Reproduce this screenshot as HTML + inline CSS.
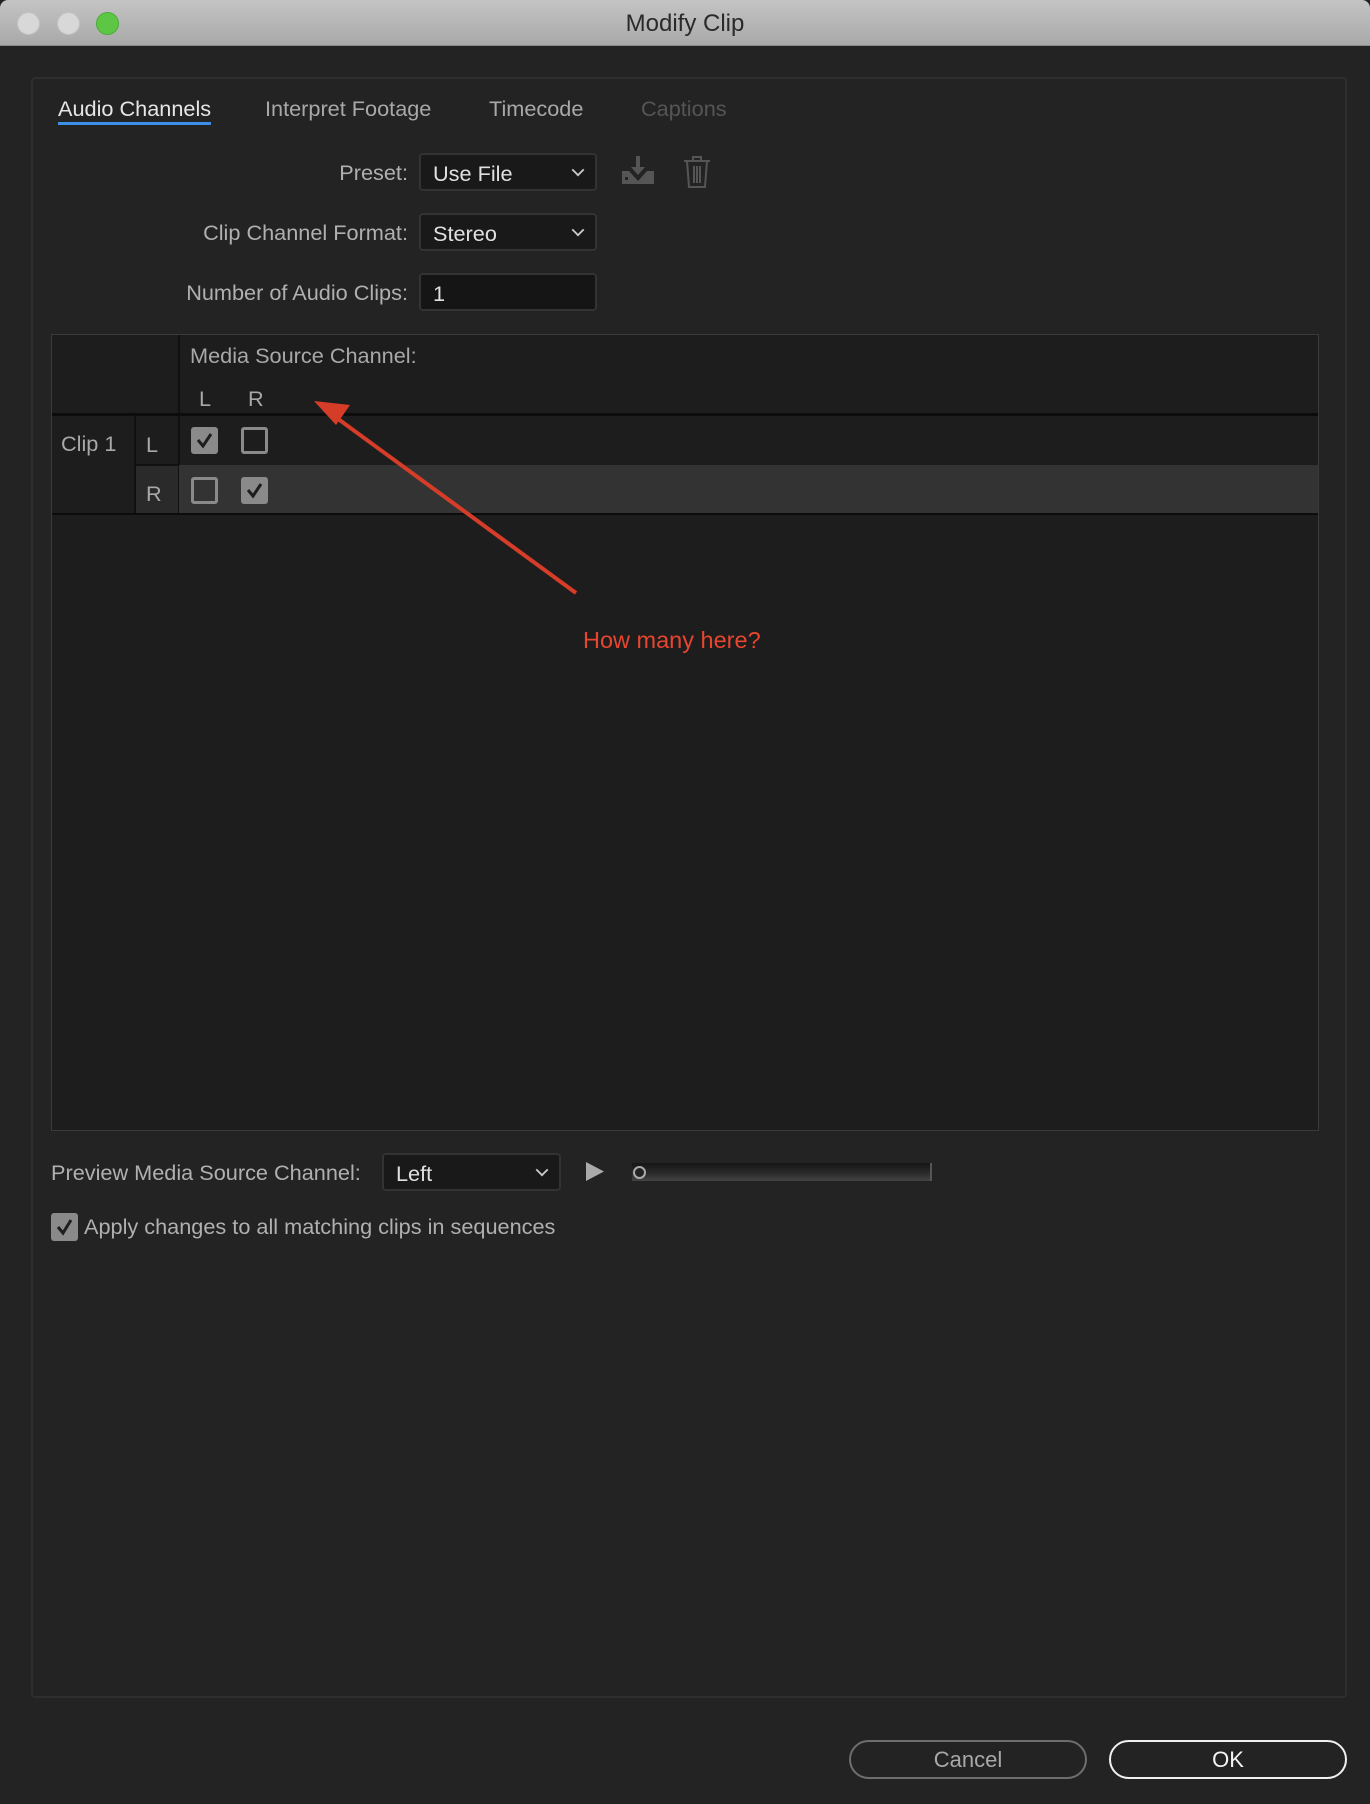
<!DOCTYPE html>
<html><head><meta charset="utf-8">
<style>
*{margin:0;padding:0;box-sizing:border-box}
html,body{width:1370px;height:1804px;overflow:hidden;background:#232323;font-family:"Liberation Sans",sans-serif;color:#b4b4b4}
.abs{position:absolute}
#title{left:0;top:0;width:1370px;height:46px;background:linear-gradient(#c4c4c4,#a9a9a9);border-bottom:1px solid #8a8a8a;border-radius:8px 8px 0 0}
#title .t{left:0;width:1370px;top:10px;text-align:center;font-size:24px;color:#2a2a2a}
.dot{width:23px;height:23px;border-radius:50%;top:12px;background:#d8d8d8;border:1px solid #c2c2c2}
#panel{left:31px;top:77px;width:1316px;height:1621px;border:2px solid #2e2e2e;border-radius:4px}
.tab{top:96px;font-size:21.7px;color:#a8a8a8;white-space:nowrap}
.lbl{font-size:21.7px;color:#b0b0b0;text-align:right;white-space:nowrap}
.dd{background:#191919;border:2px solid #333;border-radius:4px;height:38px;font-size:21.7px;color:#e0e0e0;padding:6px 12px}
.chev{position:absolute;right:12px;top:10px;width:10px;height:10px;border-right:2px solid #ccc;border-bottom:2px solid #ccc;transform:rotate(45deg) scale(.9)}
#table{left:51px;top:334px;width:1268px;height:797px;background:#1d1d1d;border:1px solid #3a3a3a}
#table .tx{font-size:21.7px;color:#a8a8a8}
.cb{width:27px;height:27px;border-radius:3px}
.cb.on{background:#8a8a8a}
.cb.off{border:3px solid #8a8a8a}
.btn{height:39px;border-radius:20px;font-size:22px;text-align:center;line-height:35px}
</style></head><body>
<div id="title" class="abs">
<div class="abs dot" style="left:17px"></div>
<div class="abs dot" style="left:57px"></div>
<div class="abs dot" style="left:96px;background:#5dc745;border-color:#4aae37"></div>
<div class="abs t">Modify Clip</div>
</div>
<div id="panel" class="abs"></div>

<div class="abs tab" style="left:58px;color:#e6e6e6">Audio Channels</div>
<div class="abs" style="left:58px;top:122px;width:153px;height:3px;background:#3d8ee8"></div>
<div class="abs tab" style="left:265px">Interpret Footage</div>
<div class="abs tab" style="left:489px">Timecode</div>
<div class="abs tab" style="left:641px;color:#555">Captions</div>

<div class="abs lbl" style="right:962px;top:160px">Preset:</div>
<div class="abs dd" style="left:419px;top:153px;width:178px">Use File<span class="chev"></span></div>
<svg class="abs" style="left:620px;top:156px" width="36" height="30" viewBox="0 0 36 30"><path d="M16 0h4v11h5l-7 8-7-8h5z" fill="#555"/><path d="M2 15h7l9 10 9-10h7v13H2z" fill="#555"/><rect x="5" y="21" width="3" height="3" fill="#232323"/></svg>
<svg class="abs" style="left:683px;top:155px" width="28" height="34" viewBox="0 0 28 34"><g fill="none" stroke="#555" stroke-width="2"><path d="M1 6h26M10 6V2h8v4M4 6l2 26h16l2-26M11 11v17M14 11v17M17 11v17"/></g></svg>

<div class="abs lbl" style="right:962px;top:220px">Clip Channel Format:</div>
<div class="abs dd" style="left:419px;top:213px;width:178px">Stereo<span class="chev"></span></div>
<div class="abs lbl" style="right:962px;top:280px">Number of Audio Clips:</div>
<div class="abs dd" style="left:419px;top:273px;width:178px;background:#151515">1</div>

<div id="table" class="abs">
 <div class="abs" style="left:126px;top:0;width:2px;height:180px;background:#111"></div>
 <div class="abs" style="left:0;top:78px;width:1266px;height:3px;background:#0c0c0c"></div>
 <div class="abs" style="left:127px;top:130px;width:1139px;height:49px;background:#333"></div>
 <div class="abs" style="left:84px;top:130px;width:42px;height:49px;background:#2a2a2a"></div>
 <div class="abs" style="left:82px;top:80px;width:2px;height:100px;background:#111"></div>
 <div class="abs" style="left:82px;top:129px;width:45px;height:2px;background:#111"></div>
 <div class="abs" style="left:0;top:178px;width:1266px;height:2px;background:#0c0c0c"></div>
 <div class="abs tx" style="left:138px;top:8px">Media Source Channel:</div>
 <div class="abs tx" style="left:147px;top:51px">L</div>
 <div class="abs tx" style="left:196px;top:51px">R</div>
 <div class="abs tx" style="left:9px;top:96px">Clip 1</div>
 <div class="abs tx" style="left:94px;top:97px">L</div>
 <div class="abs tx" style="left:94px;top:146px">R</div>
 <div class="abs cb on" style="left:139px;top:92px"><svg width="27" height="27"><path d="M7 13l5 6 8-12" stroke="#1e1e1e" stroke-width="3" fill="none"/></svg></div>
 <div class="abs cb off" style="left:189px;top:92px"></div>
 <div class="abs cb off" style="left:139px;top:142px"></div>
 <div class="abs cb on" style="left:189px;top:142px"><svg width="27" height="27"><path d="M7 13l5 6 8-12" stroke="#1e1e1e" stroke-width="3" fill="none"/></svg></div>
</div>

<svg class="abs" style="left:0;top:0" width="1370" height="700"><line x1="576" y1="593" x2="330" y2="413" stroke="#d63d28" stroke-width="4"/><path d="M314 401l36 4-14 20z" fill="#d63d28"/></svg>
<div class="abs" style="left:583px;top:627px;font-size:23.5px;color:#e8452f">How many here?</div>

<div class="abs lbl" style="left:51px;top:1160px;text-align:left">Preview Media Source Channel:</div>
<div class="abs dd" style="left:382px;top:1153px;width:179px">Left<span class="chev"></span></div>
<svg class="abs" style="left:586px;top:1162px" width="20" height="19"><path d="M0 0l18 9.5L0 19z" fill="#aaa"/></svg>
<div class="abs" style="left:632px;top:1163px;width:300px;height:18px;background:linear-gradient(#161616,#2c2c2c 60%,#444);border-right:2px solid #555"></div>
<div class="abs" style="left:633px;top:1166px;width:13px;height:13px;border-radius:50%;border:2px solid #aaa;background:#222"></div>

<div class="abs cb on" style="left:51px;top:1213px;width:27px;height:28px"><svg width="27" height="28"><path d="M7 14l5 6 8-13" stroke="#1e1e1e" stroke-width="3" fill="none"/></svg></div>
<div class="abs lbl" style="left:84px;top:1214px;text-align:left">Apply changes to all matching clips in sequences</div>

<div class="abs btn" style="left:849px;top:1740px;width:238px;border:2px solid #6e6e6e;color:#a8a8a8">Cancel</div>
<div class="abs btn" style="left:1109px;top:1740px;width:238px;border:2px solid #f0f0f0;color:#f4f4f4">OK</div>
</body></html>
